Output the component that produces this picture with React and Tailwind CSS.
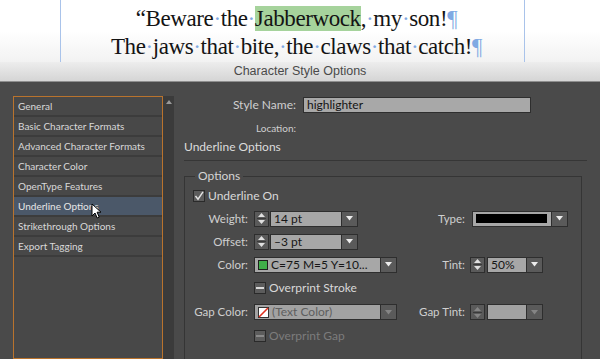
import React from "react";

const listItems = [
  "General",
  "Basic Character Formats",
  "Advanced Character Formats",
  "Character Color",
  "OpenType Features",
  "Underline Options",
  "Strikethrough Options",
  "Export Tagging",
];

function Dot() {
  return <span className="text-[#7fa9e3]">·</span>;
}

function Line({ words }) {
  return (
    <div className="leading-[28px] whitespace-nowrap">
      {words.map((w, i) => (
        <React.Fragment key={i}>
          {i > 0 && <Dot />}
          {w}
        </React.Fragment>
      ))}
      <span className="text-[#7fa9e3]">¶</span>
    </div>
  );
}

function Arrow({ dim }) {
  return (
    <div className="w-[16px] h-full shrink-0 bg-[#5a5a5a] border-l border-[#2e2e2e] flex items-center justify-center">
      <svg width="7" height="5" viewBox="0 0 7 5">
        <path d="M0 0h7L3.5 4.5z" fill={dim ? "#858585" : "#ececec"} />
      </svg>
    </div>
  );
}

function Stepper({ dim }) {
  const c = dim ? "#858585" : "#e0e0e0";
  return (
    <div className="w-[15px] h-[16px] shrink-0 border border-[#2e2e2e] bg-[#5a5a5a] flex flex-col items-center justify-center gap-[1px]">
      <svg width="7" height="4" viewBox="0 0 7 4">
        <path d="M0 4h7L3.5 0z" fill={c} />
      </svg>
      <div className="w-[9px] h-px bg-[#3a3a3a]" />
      <svg width="7" height="4" viewBox="0 0 7 4">
        <path d="M0 0h7L3.5 4z" fill={c} />
      </svg>
    </div>
  );
}

function Select({ className, children, dim }) {
  return (
    <div className={`h-[16px] flex border border-[#2e2e2e] ${className}`}>
      <div
        className={`flex-1 min-w-0 flex items-center pl-[3px] text-[12px] whitespace-nowrap overflow-hidden ${
          dim ? "bg-[#a2a2a2] text-[#5e5e5e]" : "bg-[#a7a7a7] text-[#161616]"
        }`}
      >
        {children}
      </div>
      <Arrow dim={dim} />
    </div>
  );
}

function Box({ mark, dim }) {
  return (
    <div className="w-[12px] h-[12px] shrink-0 border border-[#2a2a2a] bg-[#5c5c5c] flex items-center justify-center">
      {mark === "check" && (
        <svg width="10" height="10" viewBox="0 0 10 10">
          <path d="M1.5 5l2.5 3.2L9 0.8" stroke="#e4e4e4" strokeWidth="1.4" fill="none" />
        </svg>
      )}
      {mark === "dash" && (
        <div className={`w-[8px] h-[2px] ${dim ? "bg-[#8a8a8a]" : "bg-[#dadada]"}`} />
      )}
    </div>
  );
}

function Label({ children, className = "w-[63px]" }) {
  return <div className={`${className} shrink-0 text-right text-[#cfcfcf]`}>{children}</div>;
}

export default function App() {
  return (
    <div className="w-[600px] h-[359px] overflow-hidden flex flex-col relative bg-[#4a4a4a] font-['Lato','Liberation_Sans',sans-serif]">
      {/* document */}
      <div className="h-[62px] shrink-0 bg-gradient-to-b from-white via-white to-[#f2f2f2] overflow-hidden">
        <div className="ml-[60px] w-[465px] h-full border-x border-[#a9c3ea] pl-[8px] pt-[5px] flex flex-col items-center text-[23px] tracking-[-0.4px] text-[#141414] font-['Liberation_Serif',serif]">
          <Line
            words={[
              "“Beware",
              "the",
              <React.Fragment key="j">
                <span className="bg-[#a6d39c]">Jabberwock</span>,
              </React.Fragment>,
              "my",
              "son!",
            ]}
          />
          <Line words={["The", "jaws", "that", "bite,", "the", "claws", "that", "catch!"]} />
        </div>
      </div>

      {/* title bar */}
      <div className="h-[20px] shrink-0 bg-gradient-to-b from-[#ededed] to-[#d5d5d5] border-b border-[#8e8e8e] flex items-center justify-center text-[12.5px] text-[#4a4a4a] font-['Liberation_Sans',sans-serif]">
        Character Style Options
      </div>

      {/* dialog */}
      <div className="flex-1 min-h-0 flex overflow-hidden">
        <div className="w-[174px] shrink-0 pl-[13px] pt-[14px] flex">
          <div className="w-[150px] border border-[#b9732d] bg-[#484848]">
            {listItems.map((t) => (
              <div
                key={t}
                className={`h-[20px] flex items-center pl-[4px] text-[10px] border-b-2 border-[#3c3c3c] ${
                  t === "Underline Options" ? "bg-[#4b5869] text-[#e6e6e6]" : "text-[#d8d8d8]"
                }`}
              >
                {t}
              </div>
            ))}
          </div>
          <div className="w-[11px] bg-[#3b3b3b] flex justify-center pt-[4px]">
            <svg width="6" height="4" viewBox="0 0 6 4">
              <path d="M0 4h6L3 0z" fill="#9a9a9a" />
            </svg>
          </div>
        </div>

        <div className="ml-[10px] flex-1 flex flex-col pt-[15px] text-[11.5px]">
          <div className="h-[16px] flex items-center">
            <Label className="w-[112px] text-[12px]">Style Name:</Label>
            <div className="ml-[7px] w-[228px] h-[16px] bg-[#a8a8a8] border border-[#2e2e2e] flex items-center pl-[3px] text-[12px] text-[#141414]">
              highlighter
            </div>
          </div>
          <div className="mt-[7px] h-[16px] flex items-center">
            <Label className="w-[112px] text-[10px] text-[#b8b8b8]">Location:</Label>
          </div>
          <div className="mt-[3px] h-[16px] flex items-center text-[12px] text-[#dcdcdc]">Underline Options</div>
          <div className="mt-[5px] w-[403px] h-px bg-[#363636]" />

          <fieldset className="mt-[7px] w-[398px] flex-1 border border-[#353535] border-b-0">
            <legend className="ml-[10px] px-[3px] text-[12px] text-[#d4d4d4] leading-[16px]">Options</legend>

            <div className="h-[23px] flex items-center pl-[8px]">
              <Box mark="check" />
              <span className="ml-[3px] text-[12px] text-[#d8d8d8]">Underline On</span>
            </div>

            <div className="h-[23px] flex items-center">
              <div className="w-[232px] flex items-center">
                <Label>Weight:</Label>
                <div className="ml-[6px]"><Stepper /></div>
                <Select className="ml-[1px] w-[88px]">14 pt</Select>
              </div>
              <Label className="w-[48px]">Type:</Label>
              <Select className="ml-[7px] w-[96px]">
                <div className="w-[71px] h-[9px] bg-black" />
              </Select>
            </div>

            <div className="h-[23px] flex items-center">
              <Label>Offset:</Label>
              <div className="ml-[6px]"><Stepper /></div>
              <Select className="ml-[1px] w-[88px]">–3 pt</Select>
            </div>

            <div className="h-[23px] flex items-center">
              <div className="w-[232px] flex items-center">
                <Label>Color:</Label>
                <Select className="ml-[6px] w-[143px]">
                  <div className="w-[10px] h-[10px] bg-[#3fae49] border border-[#1e1e1e] mr-[3px] shrink-0" />
                  C=75 M=5 Y=10...
                </Select>
              </div>
              <Label className="w-[48px]">Tint:</Label>
              <div className="ml-[5px]"><Stepper /></div>
              <Select className="ml-[2px] w-[56px]">50%</Select>
            </div>

            <div className="h-[24px] flex items-center pl-[69px]">
              <Box mark="dash" />
              <span className="ml-[3px] text-[12px] text-[#d8d8d8]">Overprint Stroke</span>
            </div>

            <div className="h-[24px] flex items-center">
              <div className="w-[232px] flex items-center">
                <Label>Gap Color:</Label>
                <Select className="ml-[6px] w-[143px]" dim>
                  <svg width="11" height="11" viewBox="0 0 11 11" className="mr-[3px] shrink-0">
                    <rect x="0.5" y="0.5" width="10" height="10" fill="#fff" stroke="#333" />
                    <path d="M1 10L10 1" stroke="#e0301e" strokeWidth="1.6" />
                  </svg>
                  (Text Color)
                </Select>
              </div>
              <Label className="w-[48px]">Gap Tint:</Label>
              <div className="ml-[5px]"><Stepper dim /></div>
              <Select className="ml-[2px] w-[56px]" dim></Select>
            </div>

            <div className="h-[23px] flex items-center pl-[69px]">
              <Box mark="dash" dim />
              <span className="ml-[3px] text-[12px] text-[#7c7c7c]">Overprint Gap</span>
            </div>
          </fieldset>
        </div>
      </div>

      {/* mouse pointer */}
      <svg className="absolute left-[91px] top-[203px]" width="11" height="16" viewBox="0 0 11 16">
        <path d="M1 1v12l3-3 2.2 5 2-0.9-2.1-4.9H10z" fill="#fff" stroke="#000" strokeWidth="1" strokeLinejoin="round" />
      </svg>
    </div>
  );
}
